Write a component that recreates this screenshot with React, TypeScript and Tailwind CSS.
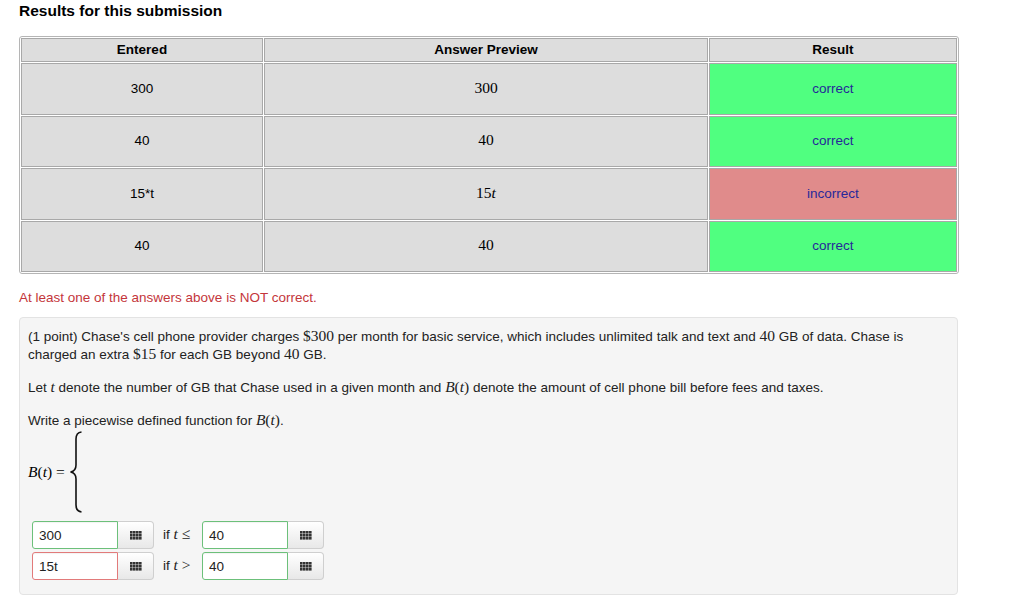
import React from "react";

interface ResultRow {
  entered: string;
  preview: React.ReactNode;
  correct: boolean;
}

const rows: ResultRow[] = [
  { entered: "300", preview: "300", correct: true },
  { entered: "40", preview: "40", correct: true },
  {
    entered: "15*t",
    preview: (
      <>
        15<i>t</i>
      </>
    ),
    correct: false,
  },
  { entered: "40", preview: "40", correct: true },
];

const sans = { fontFamily: '"Liberation Sans", Arial, sans-serif' };

const M: React.FC<{ children: React.ReactNode }> = ({ children }) => (
  <span className="font-['Liberation_Serif',serif] text-[15.5px] leading-none">{children}</span>
);

const KeypadIcon = () => (
  <svg width="12" height="9" viewBox="0 0 12 9" fill="#333">
    {[0, 3, 6].map((y) =>
      [0, 3, 6, 9].map((x) => (
        <rect key={`${x}-${y}`} x={x} y={y} width="2.6" height="2.6" />
      ))
    )}
  </svg>
);

const AnswerInput: React.FC<{ value: string; ok: boolean }> = ({ value, ok }) => (
  <div className="flex">
    <input
      readOnly
      value={value}
      className={`w-[86px] h-[28px] px-[6px] text-[13.5px] text-[#222] bg-white rounded-l-[3px] border outline-none shadow-[inset_0_1px_1px_rgba(0,0,0,0.05)] ${
        ok ? "border-[#6cc07a]" : "border-[#e27a7a]"
      }`}
      style={sans}
    />
    <button className="w-[36px] h-[28px] flex items-center justify-center border border-l-0 border-[#cfcfcf] rounded-r-[4px] bg-gradient-to-b from-white to-[#e8e8e8]">
      <KeypadIcon />
    </button>
  </div>
);

export default function App() {
  return (
    <div className="bg-white w-[1024px] h-[601px] overflow-hidden text-[#222]" style={sans}>
      <div className="px-[19px] pt-[2px]">
        <h2 className="text-[15.5px] font-bold leading-[18px] text-black">
          Results for this submission
        </h2>

        {/* results table */}
        <table className="mt-[16px] w-[940px] border border-[#b5b5b5] rounded-[3px] border-separate border-spacing-[1px] text-[13.5px] text-center">
          <thead>
            <tr className="h-[24px]">
              <th className="w-[242px] bg-[#dddddd] border border-[#a8a8a8] font-bold text-black">
                Entered
              </th>
              <th className="w-[444px] bg-[#dddddd] border border-[#a8a8a8] font-bold text-black">
                Answer Preview
              </th>
              <th className="bg-[#dddddd] border border-[#a8a8a8] font-bold text-black">
                Result
              </th>
            </tr>
          </thead>
          <tbody>
            {rows.map((r, i) => (
              <tr key={i} className="h-[51.5px]">
                <td className="bg-[#dddddd] border border-[#a8a8a8] text-black">{r.entered}</td>
                <td className="bg-[#dddddd] border border-[#a8a8a8] text-black">
                  <M>{r.preview}</M>
                </td>
                <td
                  className={`border border-[#a8a8a8] text-[#26289a] ${
                    r.correct ? "bg-[#50ff80]" : "bg-[#e08b8b]"
                  }`}
                >
                  {r.correct ? "correct" : "incorrect"}
                </td>
              </tr>
            ))}
          </tbody>
        </table>

        <p className="mt-[15px] text-[13.5px] leading-[18px] text-[#c4363b]">
          At least one of the answers above is NOT correct.
        </p>

        {/* problem */}
        <div className="mt-[10px] w-[939px] bg-[#f5f5f5] border border-[#e3e3e3] rounded-[4px] px-[8px] pt-[10px] pb-[14px] text-[13.5px] leading-[18px] text-[#222]">
          <p>
            (1 point) Chase's cell phone provider charges <M>$300</M> per month for basic service,
            which includes unlimited talk and text and <M>40</M> GB of data. Chase is charged an
            extra <M>$15</M> for each GB beyond <M>40</M> GB.
          </p>
          <p className="mt-[15px]">
            Let <M><i>t</i></M> denote the number of GB that Chase used in a given month and{" "}
            <M>
              <i>B</i>(<i>t</i>)
            </M>{" "}
            denote the amount of cell phone bill before fees and taxes.
          </p>
          <p className="mt-[15px]">
            Write a piecewise defined function for{" "}
            <M>
              <i>B</i>(<i>t</i>)
            </M>
            .
          </p>

          <div className="flex items-center h-[82px] mt-[1px]">
            <span className="font-['Liberation_Serif',serif] text-[15.5px] text-black">
              <i>B</i>(<i>t</i>) =
            </span>
            <svg width="14" height="82" viewBox="0 0 14 82" className="ml-[4px]">
              <path
                d="M12.5 1 C8.5 1.5 7 4 7 8 L7 34 C7 38 5 40.5 1.5 41 C5 41.5 7 44 7 48 L7 74 C7 78 8.5 80.5 12.5 81"
                fill="none"
                stroke="#111"
                strokeWidth="1.6"
              />
            </svg>
          </div>

          <div className="mt-[8px] ml-[4px] flex flex-col gap-[3px]">
            <div className="flex items-center">
              <AnswerInput value="300" ok />
              <span className="ml-[9px] w-[39px]">
                if <M><i>t</i> ≤</M>
              </span>
              <AnswerInput value="40" ok />
            </div>
            <div className="flex items-center">
              <AnswerInput value="15t" ok={false} />
              <span className="ml-[9px] w-[39px]">
                if <M><i>t</i> &gt;</M>
              </span>
              <AnswerInput value="40" ok />
            </div>
          </div>
        </div>
      </div>
    </div>
  );
}
